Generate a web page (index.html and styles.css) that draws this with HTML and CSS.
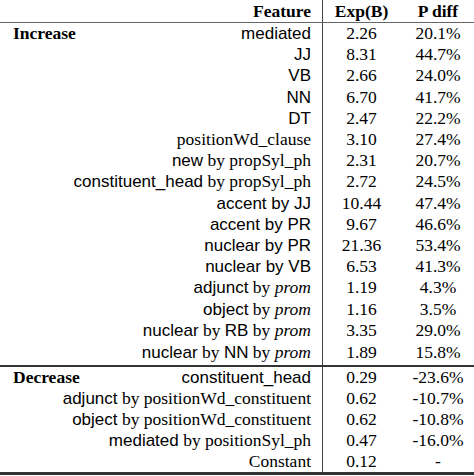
FILE: index.html
```html
<!DOCTYPE html>
<html>
<head>
<meta charset="utf-8">
<link rel="stylesheet" href="styles.css">
</head>
<body>
<div class="table">
  <div class="row head">
    <div class="c1"><span class="feat b">Feature</span></div>
    <div class="c2 b">Exp(B)</div>
    <div class="c3 b">P diff</div>
  </div>

  <div class="group inc">
    <div class="row">
      <div class="c1"><span class="label">Increase</span><span class="feat"><span class="sf">mediated</span></span></div>
      <div class="c2">2.26</div><div class="c3">20.1%</div>
    </div>
    <div class="row">
      <div class="c1"><span class="feat"><span class="sf">JJ</span></span></div>
      <div class="c2">8.31</div><div class="c3">44.7%</div>
    </div>
    <div class="row">
      <div class="c1"><span class="feat"><span class="sf">VB</span></span></div>
      <div class="c2">2.66</div><div class="c3">24.0%</div>
    </div>
    <div class="row">
      <div class="c1"><span class="feat"><span class="sf">NN</span></span></div>
      <div class="c2">6.70</div><div class="c3">41.7%</div>
    </div>
    <div class="row">
      <div class="c1"><span class="feat"><span class="sf">DT</span></span></div>
      <div class="c2">2.47</div><div class="c3">22.2%</div>
    </div>
    <div class="row">
      <div class="c1"><span class="feat">positionWd_clause</span></div>
      <div class="c2">3.10</div><div class="c3">27.4%</div>
    </div>
    <div class="row">
      <div class="c1"><span class="feat"><span class="sf">new</span> by propSyl_ph</span></div>
      <div class="c2">2.31</div><div class="c3">20.7%</div>
    </div>
    <div class="row">
      <div class="c1"><span class="feat"><span class="sf">constituent_head</span> by propSyl_ph</span></div>
      <div class="c2">2.72</div><div class="c3">24.5%</div>
    </div>
    <div class="row">
      <div class="c1"><span class="feat"><span class="sf">accent by JJ</span></span></div>
      <div class="c2">10.44</div><div class="c3">47.4%</div>
    </div>
    <div class="row">
      <div class="c1"><span class="feat"><span class="sf">accent by PR</span></span></div>
      <div class="c2">9.67</div><div class="c3">46.6%</div>
    </div>
    <div class="row">
      <div class="c1"><span class="feat"><span class="sf">nuclear by PR</span></span></div>
      <div class="c2">21.36</div><div class="c3">53.4%</div>
    </div>
    <div class="row">
      <div class="c1"><span class="feat"><span class="sf">nuclear by VB</span></span></div>
      <div class="c2">6.53</div><div class="c3">41.3%</div>
    </div>
    <div class="row">
      <div class="c1"><span class="feat"><span class="sf">adjunct</span> by <i>prom</i></span></div>
      <div class="c2">1.19</div><div class="c3">4.3%</div>
    </div>
    <div class="row">
      <div class="c1"><span class="feat"><span class="sf">object</span> by <i>prom</i></span></div>
      <div class="c2">1.16</div><div class="c3">3.5%</div>
    </div>
    <div class="row">
      <div class="c1"><span class="feat"><span class="sf">nuclear</span> by <span class="sf">RB</span> by <i>prom</i></span></div>
      <div class="c2">3.35</div><div class="c3">29.0%</div>
    </div>
    <div class="row last">
      <div class="c1"><span class="feat"><span class="sf">nuclear</span> by <span class="sf">NN</span> by <i>prom</i></span></div>
      <div class="c2">1.89</div><div class="c3">15.8%</div>
    </div>
  </div>

  <div class="group dec">
    <div class="row">
      <div class="c1"><span class="label">Decrease</span><span class="feat"><span class="sf">constituent_head</span></span></div>
      <div class="c2">0.29</div><div class="c3">-23.6%</div>
    </div>
    <div class="row">
      <div class="c1"><span class="feat"><span class="sf">adjunct</span> by positionWd_constituent</span></div>
      <div class="c2">0.62</div><div class="c3">-10.7%</div>
    </div>
    <div class="row">
      <div class="c1"><span class="feat"><span class="sf">object</span> by positionWd_constituent</span></div>
      <div class="c2">0.62</div><div class="c3">-10.8%</div>
    </div>
    <div class="row">
      <div class="c1"><span class="feat"><span class="sf">mediated</span> by positionSyl_ph</span></div>
      <div class="c2">0.47</div><div class="c3">-16.0%</div>
    </div>
    <div class="row">
      <div class="c1"><span class="feat">Constant</span></div>
      <div class="c2">0.12</div><div class="c3">-</div>
    </div>
  </div>
</div>
</body>
</html>
```

FILE: styles.css
```css
html, body {
  margin: 0;
  padding: 0;
  background: #ffffff;
}

body {
  width: 474px;
  height: 476px;
  overflow: hidden;
  font-family: "Liberation Serif", "Times New Roman", serif;
  font-size: 17.5px;
  color: #000000;
}

.table {
  width: 474px;
}

.row {
  display: grid;
  grid-template-columns: 323px 77px 74px;
  height: 21.2px;
}

.row > div {
  display: flex;
  align-items: center;
  white-space: nowrap;
}

.head {
  height: 22px;
  border-bottom: 1px solid #666666;
}

.b {
  font-weight: bold;
}

.c1 {
  box-sizing: border-box;
  border-right: 1px solid #444444;
  padding-left: 13px;
  padding-right: 11px;
}

.c2, .c3 {
  justify-content: center;
}

.c3 {
  padding-left: 2px;
}

.label {
  font-weight: bold;
}

.feat {
  margin-left: auto;
}

.sf {
  font-family: "Liberation Sans", Arial, sans-serif;
  font-size: 17px;
}

.inc .last {
  height: 24px;
}

.dec {
  border-top: 2px solid #333333;
  border-bottom: 3px solid #333333;
}

.dec .row {
  height: 21px;
}
```
